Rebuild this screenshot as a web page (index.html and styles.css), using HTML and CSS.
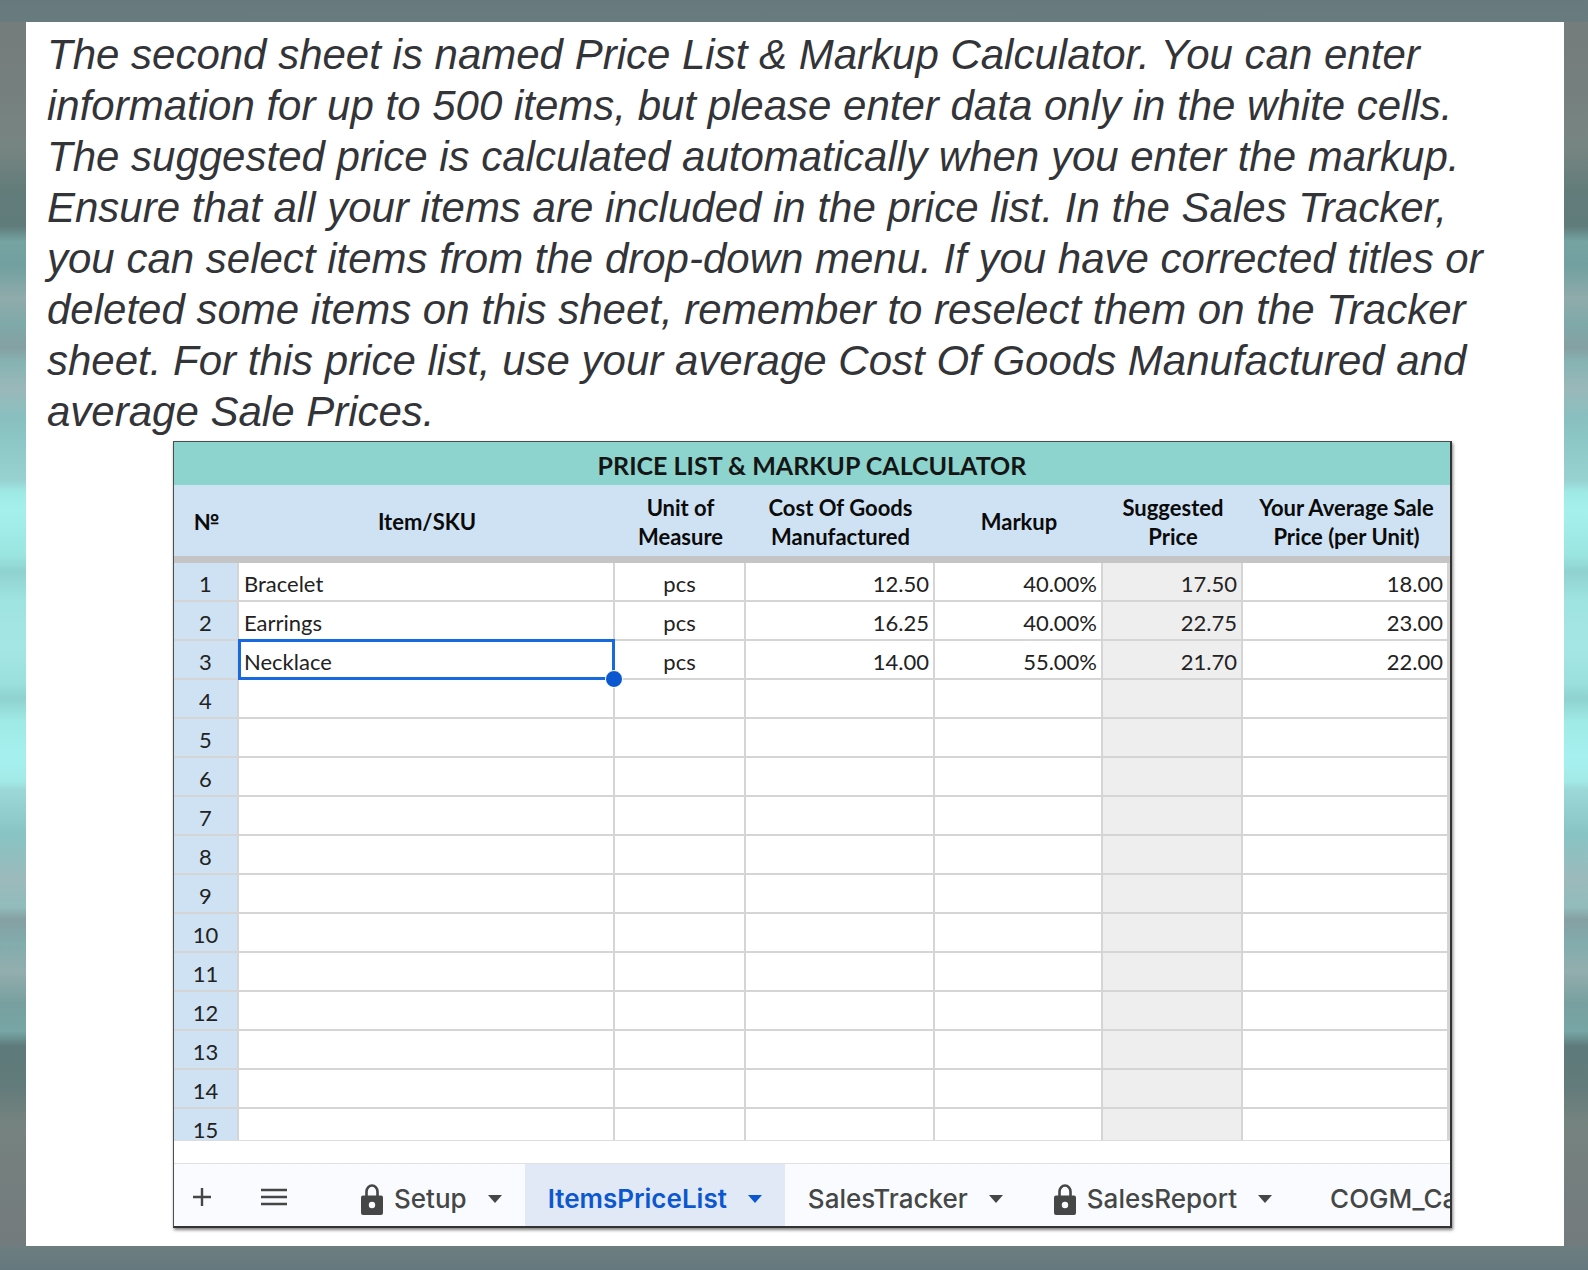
FILE: index.html
```html
<!DOCTYPE html>
<html lang="en">
<head>
<meta charset="utf-8">
<title>Price List &amp; Markup Calculator</title>
<link rel="stylesheet" href="styles.css">
</head>
<body>
<svg class="symbols" aria-hidden="true">
  <symbol id="lock" viewBox="0 0 22 31">
    <path d="M5.500 13V7.500a5.500 6 0 0 1 11 0V13" fill="none" stroke="currentColor" stroke-width="2.600"/>
    <path fill-rule="evenodd" fill="currentColor" d="M2 11.500h18a2 2 0 0 1 2 2V29a2 2 0 0 1-2 2H2a2 2 0 0 1-2-2V13.500a2 2 0 0 1 2-2zM11 17.800a3.200 3.200 0 1 0 0 6.400 3.200 3.200 0 0 0 0-6.400z"/>
  </symbol>
  <symbol id="caret" viewBox="0 0 14 8"><path fill="currentColor" d="M0 0h14L7 8z"/></symbol>
</svg>
<main class="paper">
  <p class="intro">The second sheet is named Price List &amp; Markup Calculator. You can enter information for up to 500 items, but please enter data only in the white cells. The suggested price is calculated automatically when you enter the markup. Ensure that all your items are included in the price list. In the Sales Tracker, you can select items from the drop-down menu. If you have corrected titles or deleted some items on this sheet, remember to reselect them on the Tracker sheet. For this price list, use your average Cost Of Goods Manufactured and average Sale Prices.</p>
  <section class="sheet">
    <div class="grid">
      <table>
        <caption>PRICE LIST &amp; MARKUP CALCULATOR</caption>
        <colgroup>
          <col class="c-num"><col class="c-item"><col class="c-unit"><col class="c-cost"><col class="c-markup"><col class="c-price"><col class="c-sale">
        </colgroup>
        <thead>
          <tr><th scope="col">№</th><th scope="col">Item/SKU</th><th scope="col">Unit of<br>Measure</th><th scope="col">Cost Of Goods<br>Manufactured</th><th scope="col">Markup</th><th scope="col">Suggested<br>Price</th><th scope="col">Your Average Sale<br>Price (per Unit)</th></tr>
        </thead>
        <tbody>
          <tr><th scope="row">1</th><td>Bracelet</td><td class="unit">pcs</td><td class="num">12.50</td><td class="num">40.00%</td><td class="num calc">17.50</td><td class="num">18.00</td></tr>
          <tr><th scope="row">2</th><td>Earrings</td><td class="unit">pcs</td><td class="num">16.25</td><td class="num">40.00%</td><td class="num calc">22.75</td><td class="num">23.00</td></tr>
          <tr><th scope="row">3</th><td class="selected">Necklace</td><td class="unit">pcs</td><td class="num">14.00</td><td class="num">55.00%</td><td class="num calc">21.70</td><td class="num">22.00</td></tr>
          <tr><th scope="row">4</th><td></td><td></td><td></td><td></td><td class="calc"></td><td></td></tr>
          <tr><th scope="row">5</th><td></td><td></td><td></td><td></td><td class="calc"></td><td></td></tr>
          <tr><th scope="row">6</th><td></td><td></td><td></td><td></td><td class="calc"></td><td></td></tr>
          <tr><th scope="row">7</th><td></td><td></td><td></td><td></td><td class="calc"></td><td></td></tr>
          <tr><th scope="row">8</th><td></td><td></td><td></td><td></td><td class="calc"></td><td></td></tr>
          <tr><th scope="row">9</th><td></td><td></td><td></td><td></td><td class="calc"></td><td></td></tr>
          <tr><th scope="row">10</th><td></td><td></td><td></td><td></td><td class="calc"></td><td></td></tr>
          <tr><th scope="row">11</th><td></td><td></td><td></td><td></td><td class="calc"></td><td></td></tr>
          <tr><th scope="row">12</th><td></td><td></td><td></td><td></td><td class="calc"></td><td></td></tr>
          <tr><th scope="row">13</th><td></td><td></td><td></td><td></td><td class="calc"></td><td></td></tr>
          <tr><th scope="row">14</th><td></td><td></td><td></td><td></td><td class="calc"></td><td></td></tr>
          <tr><th scope="row">15</th><td></td><td></td><td></td><td></td><td class="calc"></td><td></td></tr>
        </tbody>
      </table>
    </div>
    <nav class="tabs" aria-label="Sheets">
      <div class="tools">
        <button class="tool" type="button" aria-label="Add sheet"><svg width="20" height="20" viewBox="0 0 20 20"><path d="M10 1v18M1 10h18" stroke="currentColor" stroke-width="2.400"/></svg></button>
        <button class="tool" type="button" aria-label="All sheets"><svg width="26" height="20" viewBox="0 0 26 20"><path d="M0 3h26M0 10h26M0 17h26" stroke="currentColor" stroke-width="2.600"/></svg></button>
      </div>
      <button class="tab locked" type="button"><svg class="lock"><use href="#lock"/></svg><span>Setup</span><svg class="caret"><use href="#caret"/></svg></button>
      <button class="tab active" type="button" aria-current="page"><span>ItemsPriceList</span><svg class="caret"><use href="#caret"/></svg></button>
      <button class="tab" type="button"><span>SalesTracker</span><svg class="caret"><use href="#caret"/></svg></button>
      <button class="tab locked" type="button"><svg class="lock"><use href="#lock"/></svg><span>SalesReport</span><svg class="caret"><use href="#caret"/></svg></button>
      <button class="tab last" type="button"><span>COGM_Ca</span></button>
    </nav>
  </section>
</main>
</body>
</html>
```
FILE: styles.css
```css
* { box-sizing: border-box; }

body {
  position: relative;
  z-index: 0;
  margin: 0;
  padding: 22px 24px 24px 26px;
  font-family: Lato, "Liberation Sans", sans-serif;
  background: linear-gradient(to bottom,
    #757b7c 0%, #757f7d 6%, #778582 11.5%, #627c7a 15%, #5f7b7a 17.8%,
    #74a3a2 19%, #72a0a0 21%, #90abab 23.5%, #7fa9a9 25.5%, #85a0a2 27.4%,
    #87b3b3 28.5%, #9ab8b9 30.6%, #88c0c0 33%, #97d2d1 37.8%, #a0eae6 38.8%,
    #a5f0ed 40.2%, #9be5e1 43.7%, #8fd2cf 45%, #9fe3e0 47.2%, #a4e6e3 51%,
    #9be0dd 53.8%, #8fd2d0 55%, #9feae6 56.8%, #a6f1f0 59.6%, #a2eae8 61.5%,
    #9bd8d7 62.2%, #88c4c4 65.7%, #9cbabc 69.2%, #92bcbc 71.4%, #85a0a3 72.4%,
    #82acad 74.3%, #93aeae 76.5%, #789f9f 79%, #76a6a5 81.2%, #5e7a7a 82.4%,
    #627b7b 85.5%, #75837f 88.4%, #757f7e 92.5%, #747b7d 97.500%, #65787c 100%);
}

/* Plain bands across the top and bottom of the striped backdrop. */
body::before,
body::after {
  content: "";
  position: absolute;
  z-index: -1;
  left: 0;
  right: 0;
  height: 22px;
  background: linear-gradient(#67797d, #687b7e);
}

body::before { top: 0; }

body::after {
  bottom: 0;
  height: 24px;
  background: linear-gradient(#6c7e7f, #65787e);
}

.symbols { position: absolute; width: 0; height: 0; }

.paper {
  background: #fff;
  padding: 7px 21px 18px;
}

.intro {
  margin: 0;
  padding-right: 33px;
  font: italic 42px/51px "Liberation Sans", Arial, sans-serif;
  color: #333438;
}

.sheet {
  margin: 4px 91px 0 126px;
  border: 1px solid #4a4e4e;
  border-right: 2px solid #333;
  border-bottom: 2px solid #333;
  box-shadow: 1px 2px 3px rgba(0, 0, 0, .5);
  overflow: hidden;
  background: #fff;
}

/* The last row is cut off by the bottom of the pane. */
.grid {
  overflow: hidden;
  border-bottom: 1px solid #ddd;
  color: #222;
}

table {
  width: 100%;
  margin-bottom: -8px;
  table-layout: fixed;
  border-collapse: separate;
  border-spacing: 0;
  font-size: 22px;
  line-height: 29px;
}

.c-num { width: 65px; }
.c-unit { width: 131px; }
.c-cost { width: 189px; }
.c-markup { width: 168px; }
.c-price { width: 140px; }
.c-sale { width: 207px; }

caption {
  padding: 8px 0 5px;
  background: #8cd4cd;
  color: #151515;
  font-size: 25px;
  line-height: 30px;
  font-weight: 700;
}

thead th {
  height: 78px;
  padding: 2px 0 0;
  background: #cfe2f3;
  border-bottom: 7px solid #c5c5c5;
  color: #0b0b0b;
  font-weight: 700;
}

tbody th, td {
  height: 39px;
  padding: 0 5px 2px;
  border: solid #d5d5d5;
  border-width: 0 2px 2px 0;
  vertical-align: bottom;
}

tbody th {
  background: #cfe2f3;
  font-weight: 400;
  text-align: center;
}

td { text-align: left; }
.unit { text-align: center; }
.num { padding-right: 4px; text-align: right; }
.calc { background: #eee; }
td:last-child { border-right-width: 3px; }

.selected { position: relative; }

.selected::before {
  content: "";
  position: absolute;
  inset: -2px -2px -2px -1px;
  border: 3px solid #1769e0;
}

.selected::after {
  content: "";
  position: absolute;
  right: -10px;
  bottom: -10px;
  width: 16px;
  height: 16px;
  border: 1px solid #fff;
  border-radius: 50%;
  background: #0b57d0;
}

.tabs {
  display: flex;
  margin-top: 22px;
  border-top: 1px solid #dfe1e3;
  background: #f9fbff;
  color: #444746;
}

button {
  border: 0;
  margin: 0;
  padding: 0;
  background: none;
  color: inherit;
}

.tools {
  display: flex;
  flex: none;
  gap: 49px;
  width: 159px;
  padding-left: 18px;
}

.tool { display: flex; align-items: center; padding-top: 4px; }

.tab {
  display: flex;
  flex: none;
  align-items: center;
  height: 62px;
  padding: 8px 23px 0;
  font: 500 26px/30px Inter, "Liberation Sans", sans-serif;
  font-optical-sizing: none;
}

.locked { padding-left: 28px; }
.last { padding-left: 35px; }

.active {
  background: #e1e9f7;
  color: #0b57d0;
  font-weight: 600;
}

.lock { width: 22px; height: 31px; margin-right: 11px; }
.caret { width: 14px; height: 8px; margin-left: 21px; }
```
